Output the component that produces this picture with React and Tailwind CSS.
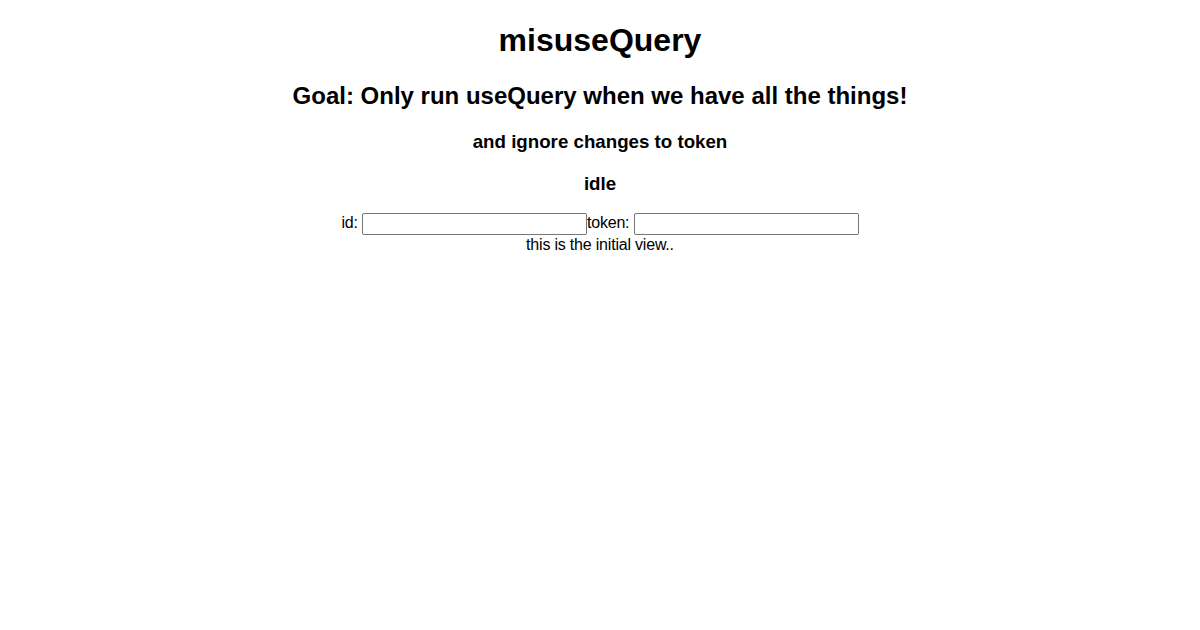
import { useState } from "react";

export default function App() {
  const [id, setId] = useState("");
  const [token, setToken] = useState("");

  return (
    <div className="font-['Liberation_Sans',Arial,sans-serif] text-black text-center pt-[22px] px-2 text-base leading-[normal]">
      <h1 className="text-[32px] font-bold leading-[normal] mb-[23px]">misuseQuery</h1>
      <h2 className="text-[24px] font-bold leading-[normal] mb-[21px]">Goal: Only run useQuery when we have all the things!</h2>
      <h3 className="text-[18.72px] font-bold leading-[normal] mb-[20px]">and ignore changes to token</h3>
      <h3 className="text-[18.72px] font-bold leading-[normal] mb-[18px]">idle</h3>
      <div className="tracking-[-0.2px]">
        <label>
          id:{" "}
          <input
            value={id}
            onChange={(e) => setId(e.target.value)}
            className="w-[225px] h-[22px] border border-[#767676] rounded-[2px] px-[2px] align-middle"
          />
        </label>
        <label>
          token:{" "}
          <input
            value={token}
            onChange={(e) => setToken(e.target.value)}
            className="w-[225px] h-[22px] border border-[#767676] rounded-[2px] px-[2px] align-middle"
          />
        </label>
      </div>
      <div className="mt-[1px] tracking-[-0.2px]">this is the initial view..</div>
    </div>
  );
}
